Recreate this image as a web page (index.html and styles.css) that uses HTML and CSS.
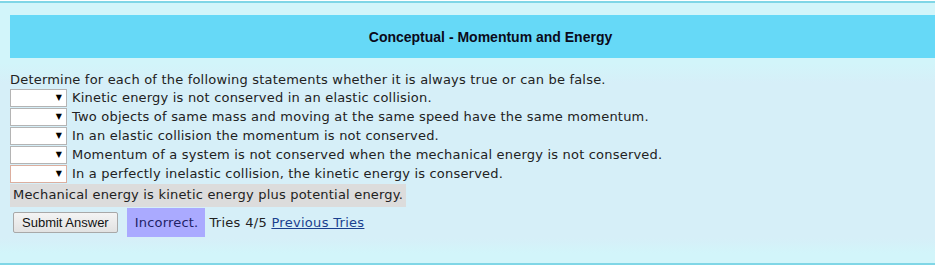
FILE: index.html
```html
<!DOCTYPE html>
<html>
<head>
<meta charset="utf-8">
<link rel="stylesheet" href="styles.css">
</head>
<body>
<div class="problem">
  <div class="title">Conceptual - Momentum and Energy</div>
  <div class="qbody">
    <div class="prompt">Determine for each of the following statements whether it is always true or can be false.</div>
    <div class="row"><span class="sel"><span class="arrow">▼</span></span><span class="stmt">Kinetic energy is not conserved in an elastic collision.</span></div>
    <div class="row"><span class="sel"><span class="arrow">▼</span></span><span class="stmt">Two objects of same mass and moving at the same speed have the same momentum.</span></div>
    <div class="row"><span class="sel"><span class="arrow">▼</span></span><span class="stmt">In an elastic collision the momentum is not conserved.</span></div>
    <div class="row"><span class="sel"><span class="arrow">▼</span></span><span class="stmt">Momentum of a system is not conserved when the mechanical energy is not conserved.</span></div>
    <div class="row"><span class="sel sel-wrong"><span class="arrow">▼</span></span><span class="stmt">In a perfectly inelastic collision, the kinetic energy is conserved.</span></div>
    <div class="hint">Mechanical energy is kinetic energy plus potential energy.</div>
    <div class="actions">
      <button class="submit">Submit Answer</button>
      <span class="status">Incorrect.</span>
      <span class="tries">Tries 4/5 <a href="#" class="prev">Previous Tries</a></span>
    </div>
  </div>
</div>
</body>
</html>
```
FILE: styles.css
```css
html, body {
  margin: 0;
  padding: 0;
  background: #ffffff;
}
body {
  padding-top: 1px;
}
.problem {
  height: 260px;
  border-top: 2px solid #80d6e6;
  border-bottom: 2px solid #80d6e6;
  background: linear-gradient(#d2f5fa 0px, #d2f5fa 60px, #d6eff8 80px, #d6eff8 235px, #d2f5fa 250px);
  box-sizing: content-box;
}
.title {
  margin: 12px 0 0 10px;
  padding-left: 36px;
  height: 43px;
  background: #66d9f7;
  display: flex;
  align-items: center;
  justify-content: center;
  font-family: "Liberation Sans", Arial, sans-serif;
  font-weight: bold;
  font-size: 14px;
  color: #0a0a1a;
}
.qbody {
  padding: 14px 0 0 10px;
  font-family: "DejaVu Sans", Verdana, sans-serif;
  font-size: 13px;
  letter-spacing: 0.2px;
  color: #222222;
}
.prompt {
  line-height: 16px;
}
.row {
  display: flex;
  align-items: center;
  height: 19px;
}
.sel {
  width: 55px;
  height: 16px;
  border: 1px solid #b4b4b4;
  background: #ffffff;
  position: relative;
  flex: none;
}
.sel-wrong {
  border-color: #dcae9e;
}
.arrow {
  position: absolute;
  right: 4px;
  top: 1px;
  font-size: 8px;
  letter-spacing: 0;
  line-height: 14px;
  color: #000;
}
.stmt {
  margin-left: 5px;
}
.hint {
  display: inline-block;
  background: #dcdcdc;
  padding: 3px 3px 4px 3px;
  line-height: 16px;
  margin-top: 1px;
}
.actions {
  display: flex;
  align-items: center;
  margin-top: 1px;
}
.submit {
  margin-left: 3px;
  height: 21px;
  padding: 0 8px;
  font-family: "Liberation Sans", Arial, sans-serif;
  font-size: 13px;
  letter-spacing: 0;
  color: #111;
  background: linear-gradient(#f4f4f4, #e2e2e2);
  border: 1px solid #a8a8a8;
  border-radius: 2px;
}
.status {
  margin-left: 9px;
  background: #aaaaff;
  color: #222266;
  height: 29px;
  line-height: 29px;
  padding: 0 7px 0 8px;
}
.tries {
  margin-left: 4px;
  letter-spacing: 0.3px;
}
.prev {
  color: #1a3f8f;
  text-decoration: underline;
}
```
